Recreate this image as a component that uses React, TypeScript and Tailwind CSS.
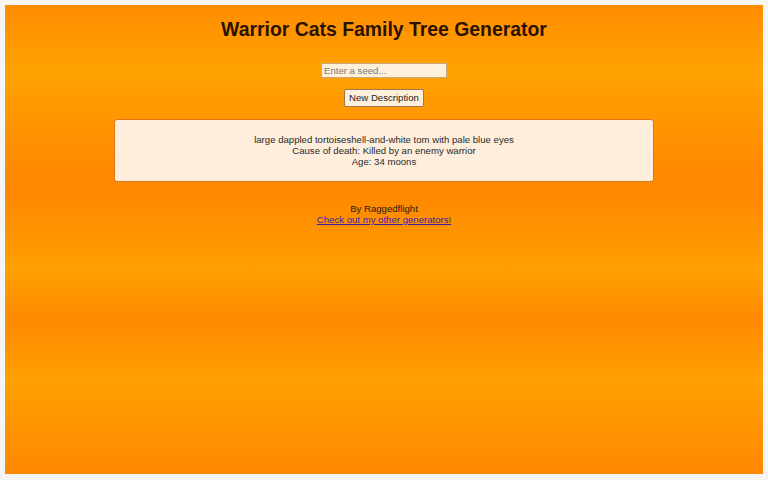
import { useState } from "react"

const descriptions = {
  look: "large dappled tortoiseshell-and-white tom with pale blue eyes",
  death: "Cause of death: Killed by an enemy warrior",
  age: "Age: 34 moons",
}

export default function App() {
  const [seed, setSeed] = useState("")

  return (
    <div className="min-h-screen bg-[#f5f5f5] p-[5px] font-['Liberation_Sans',Arial,sans-serif]">
      <div className="flex min-h-[469px] flex-col items-center bg-[linear-gradient(to_bottom,#ff8c00_0%,#ffa200_14%,#ff8a00_35%,#ff8800_40%,#ffa000_57%,#ff8a00_67%,#ffa000_80%,#ff8800_100%)] pt-[12px]">
        <h1 className="text-[19.4px] font-bold leading-[24px] text-[#2a1200]">
          Warrior Cats Family Tree Generator
        </h1>

        <input
          value={seed}
          onChange={(e) => setSeed(e.target.value)}
          placeholder="Enter a seed..."
          className="mt-[22px] h-[15px] w-[126px] border border-[#c9a77a] bg-[#fff0dc] px-[2px] text-[9.6px] text-[#333] placeholder:text-[#7a7a7a] outline-none"
        />

        <button className="mt-[11px] h-[18px] rounded-[2px] border border-[#9a7a55] bg-[#fff0dc] px-[4px] text-[9.6px] leading-none text-[#222]">
          New Description
        </button>

        <div className="mt-[12px] flex h-[63px] w-[540px] flex-col items-center justify-center rounded-[3px] border border-[#d9781a] bg-[#ffeedb] text-[9.6px] leading-[11px] text-[#2a2a2a]">
          <p>{descriptions.look}</p>
          <p>{descriptions.death}</p>
          <p>{descriptions.age}</p>
        </div>

        <div className="mt-[21px] flex flex-col items-center text-[9.6px] leading-[11px] text-[#2a1a10]">
          <p>By Raggedflight</p>
          <a href="#" className="text-[#3b1fa8] underline">
            Check out my other generators!
          </a>
        </div>
      </div>
    </div>
  )
}
